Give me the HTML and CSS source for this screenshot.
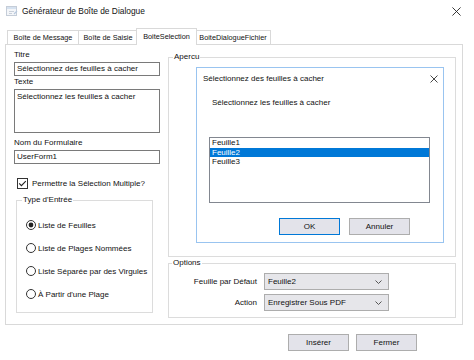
FILE: index.html
```html
<!DOCTYPE html>
<html lang="fr">
<head>
    <meta charset="UTF-8">
    <meta name="viewport" content="width=device-width, initial-scale=1.0">
    <title>Générateur de Boîte de Dialogue</title>
    <link rel="stylesheet" href="styles.css">
</head>
<body>
    <div class="window">
        <div class="titlebar">
            <svg class="app-icon" viewBox="0 0 12 12">
                <rect x="0.5" y="1.5" width="10" height="9" fill="#f4f6f9" stroke="#c5cdd8"/>
                <rect x="1" y="2" width="9" height="2" fill="#d6e2f0"/>
                <path d="M3 6.5h5M3 8.5h3" stroke="#c9d0da"/>
                <path d="M8 9l3-3" stroke="#b8c9de" stroke-width="1.3"/>
            </svg>
            <span class="title">Générateur de Boîte de Dialogue</span>
            <svg class="win-close" viewBox="0 0 10 10">
                <path d="M0.5 0.5l9 9M9.5 0.5l-9 9" stroke="#222" stroke-width="1"/>
            </svg>
        </div>

        <div class="tabs">
            <div class="tab tab-message">Boîte de Message</div>
            <div class="tab tab-saisie">Boîte de Saisie</div>
            <div class="tab tab-selection active">BoiteSelection</div>
            <div class="tab tab-fichier">BoiteDialogueFichier</div>
        </div>

        <div class="tabpage">
            <div class="col-left">
                <span class="label">Titre</span>
                <div class="textbox">Sélectionnez des feuilles à cacher</div>
                <span class="label label-gap-s">Texte</span>
                <div class="textbox textarea">Sélectionnez les feuilles à cacher</div>
                <span class="label label-gap-m">Nom du Formulaire</span>
                <div class="textbox">UserForm1</div>

                <div class="check-row">
                    <svg class="checkbox" viewBox="0 0 11 11">
                        <rect x="0.5" y="0.5" width="10" height="10" fill="#fff" stroke="#333"/>
                        <path d="M2.2 5.4l2.2 2.3 4.4-4.6" fill="none" stroke="#222" stroke-width="1.1"/>
                    </svg>
                    <span>Permettre la Sélection Multiple?</span>
                </div>

                <fieldset class="group group-type">
                    <legend>Type d'Entrée</legend>
                    <div class="radio-row">
                        <svg class="radio" viewBox="0 0 10 10">
                            <circle cx="5" cy="5" r="4.5" fill="#fff" stroke="#333"/>
                            <circle cx="5" cy="5" r="2.4" fill="#222"/>
                        </svg>
                        <span>Liste de Feuilles</span>
                    </div>
                    <div class="radio-row">
                        <svg class="radio" viewBox="0 0 10 10">
                            <circle cx="5" cy="5" r="4.5" fill="#fff" stroke="#333"/>
                        </svg>
                        <span>Liste de Plages Nommées</span>
                    </div>
                    <div class="radio-row">
                        <svg class="radio" viewBox="0 0 10 10">
                            <circle cx="5" cy="5" r="4.5" fill="#fff" stroke="#333"/>
                        </svg>
                        <span>Liste Séparée par des Virgules</span>
                    </div>
                    <div class="radio-row">
                        <svg class="radio" viewBox="0 0 10 10">
                            <circle cx="5" cy="5" r="4.5" fill="#fff" stroke="#333"/>
                        </svg>
                        <span>À Partir d'une Plage</span>
                    </div>
                </fieldset>
            </div>

            <div class="col-right">
                <fieldset class="group group-preview">
                    <legend>Apercu</legend>
                    <div class="dialog">
                        <div class="dialog-title">
                            <span>Sélectionnez des feuilles à cacher</span>
                            <svg class="dialog-close" viewBox="0 0 8 8">
                                <path d="M0.5 0.5l7 7M7.5 0.5l-7 7" stroke="#333" stroke-width="0.9"/>
                            </svg>
                        </div>
                        <div class="dialog-body">
                            <div class="dialog-label">Sélectionnez les feuilles à cacher</div>
                            <ul class="listbox">
                                <li>Feuille1</li>
                                <li class="selected">Feuille2</li>
                                <li>Feuille3</li>
                            </ul>
                            <div class="dialog-buttons">
                                <button class="btn btn-default">OK</button>
                                <button class="btn">Annuler</button>
                            </div>
                        </div>
                    </div>
                </fieldset>

                <fieldset class="group group-options">
                    <legend>Options</legend>
                    <div class="options-grid">
                        <span class="opt-label">Feuille par Défaut</span>
                        <div class="combo">
                            <span>Feuille2</span>
                            <svg class="chevron" viewBox="0 0 7 4"><path d="M0.5 0.5l3 3 3-3" fill="none" stroke="#555"/></svg>
                        </div>
                        <span class="opt-label">Action</span>
                        <div class="combo">
                            <span>Enregistrer Sous PDF</span>
                            <svg class="chevron" viewBox="0 0 7 4"><path d="M0.5 0.5l3 3 3-3" fill="none" stroke="#555"/></svg>
                        </div>
                    </div>
                </fieldset>
            </div>
        </div>

        <div class="actions">
            <button class="btn">Insérer</button>
            <button class="btn">Fermer</button>
        </div>
    </div>
</body>
</html>
```

FILE: styles.css
```css
body {
    margin: 0;
    font-family: "Liberation Sans", Arial, sans-serif;
    font-size: 8px;
    color: #111;
    background: #fff;
}
.window {
    width: 474px;
    height: 360px;
    overflow: hidden;
}
.titlebar {
    height: 22px;
    display: flex;
    align-items: center;
    padding-left: 6px;
}
.app-icon {
    width: 12px;
    height: 12px;
    margin-right: 4px;
}
.title {
    flex: 1;
    font-size: 8.4px;
}
.win-close {
    width: 9px;
    height: 9px;
    margin-right: 13px;
}

/* onglets */
.tabs {
    height: 22px;
    display: flex;
    align-items: flex-end;
    padding-left: 7px;
}
.tab {
    box-sizing: border-box;
    height: 14px;
    line-height: 13px;
    font-size: 7.3px;
    border: 1px solid #d9d9d9;
    border-bottom: none;
    text-align: center;
    background: #fff;
    white-space: nowrap;
}
.tab-message { width: 72px; }
.tab-saisie { width: 60px; margin-left: -1px; }
.tab-fichier { width: 76px; margin-left: -1px; }
.tab.active {
    position: relative;
    z-index: 1;
    width: 61px;
    height: 17px;
    line-height: 15px;
    margin: 0 -1px -1px -2px;
}

.tabpage {
    box-sizing: border-box;
    margin-left: 5px;
    width: 458px;
    height: 281px;
    border: 1px solid #d9d9d9;
    display: flex;
    gap: 8px;
    padding: 5px 0 0 8px;
}

/* colonne gauche */
.col-left {
    width: 146px;
    display: flex;
    flex-direction: column;
}
.label {
    display: block;
    line-height: 10px;
    margin-bottom: 2px;
}
.label-gap-s { margin-top: 1px; }
.label-gap-m { margin-top: 5px; }
.textbox {
    box-sizing: border-box;
    height: 14px;
    line-height: 12px;
    padding: 0 2px;
    border: 1px solid #7a7a7a;
    white-space: nowrap;
}
.textarea {
    height: 44px;
    padding-top: 1px;
}
.check-row {
    display: flex;
    align-items: center;
    gap: 4px;
    height: 12px;
    margin: 13px 0 0 3px;
}
.checkbox {
    width: 11px;
    height: 11px;
}

.group {
    margin: 0;
    border: 1px solid #dcdcdc;
    min-width: 0;
}
.group legend {
    padding: 0 1px;
    line-height: 10px;
}
.group-type {
    margin: 6px 0 0 2px;
    width: 137px;
    box-sizing: border-box;
    height: 118px;
    padding: 14px 4px 0 4px;
    display: flex;
    flex-direction: column;
    gap: 11px;
}
.group-type legend {
    margin-left: 1px;
}
.radio-row {
    display: flex;
    align-items: center;
    gap: 2px;
    height: 12px;
    padding-left: 5px;
}
.radio {
    width: 10px;
    height: 10px;
}

/* colonne droite */
.col-right {
    width: 288px;
}
.group-preview {
    box-sizing: border-box;
    margin-top: 2px;
    height: 205px;
    padding: 5px 0 0 4px;
}
.dialog {
    box-sizing: border-box;
    margin-left: 23px;
    width: 248px;
    height: 176px;
    border: 1px solid #99c4f0;
}
.dialog-title {
    height: 21px;
    display: flex;
    align-items: center;
    justify-content: space-between;
    padding: 0 5px 0 6px;
}
.dialog-close {
    width: 8px;
    height: 8px;
}
.dialog-body {
    padding: 0 13px 0 12px;
}
.dialog-label {
    line-height: 10px;
    margin: 9px 0 0 3px;
}
.listbox {
    list-style: none;
    box-sizing: border-box;
    margin: 29px 0 0;
    padding: 0;
    height: 66px;
    border: 1px solid #828790;
}
.listbox li {
    line-height: 9.5px;
    padding-left: 2px;
}
.listbox li.selected {
    background: #0078d7;
    color: #fff;
}
.dialog-buttons {
    display: flex;
    justify-content: flex-end;
    gap: 9px;
    margin-top: 15px;
    padding-right: 20px;
}

.btn {
    box-sizing: border-box;
    width: 61px;
    height: 17px;
    padding: 0;
    font: inherit;
    color: #111;
    background: #e3e3ea;
    border: 1px solid #adadad;
}
.btn-default {
    border-color: #0078d7;
}

.group-options {
    box-sizing: border-box;
    margin-top: 1px;
    padding: 5px 0 6px 0;
}
.group-options legend {
    margin-left: 3px;
}
.options-grid {
    display: grid;
    grid-template-columns: 88px 125px;
    grid-auto-rows: 17px;
    column-gap: 7px;
    row-gap: 4px;
}
.opt-label {
    text-align: right;
    align-self: center;
}
.combo {
    box-sizing: border-box;
    display: flex;
    align-items: center;
    justify-content: space-between;
    padding: 0 6px 0 3px;
    background: #e6e6ea;
    border: 1px solid #adadad;
}
.chevron {
    width: 7px;
    height: 4px;
}

.actions {
    display: flex;
    justify-content: flex-end;
    gap: 7px;
    padding: 9px 57px 0 0;
}
```
